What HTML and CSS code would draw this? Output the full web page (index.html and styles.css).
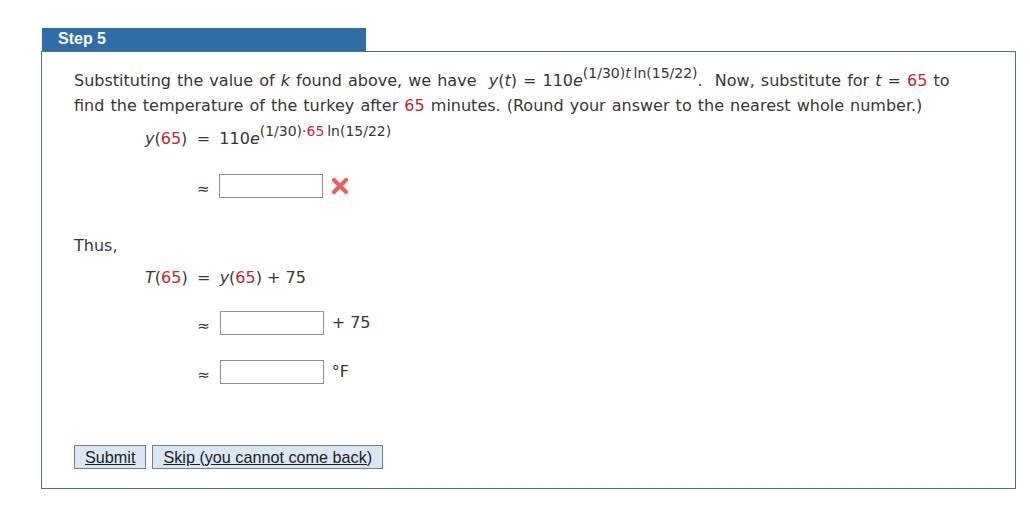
FILE: index.html
```html
<!DOCTYPE html>
<html lang="en">
  <head>
    <meta charset="UTF-8" />
    <title>Step 5</title>
    <link rel="stylesheet" href="styles.css">
  </head>
  <body>
    <div class="step">
      <div class="step-title">Step 5</div>
      <div class="step-box">
        <p class="para">
          Substituting the value of <i>k</i> found above, we have&nbsp; <i>y</i>(<i>t</i>) = 110<i>e</i><sup>(1/30)<i>t</i>&thinsp;ln(15/22)</sup>.&nbsp; Now, substitute for <i>t</i> = <span class="red">65</span> to<br>
          find the temperature of the turkey after <span class="red">65</span> minutes. (Round your answer to the nearest whole number.)
        </p>
        <table class="math math-first">
          <tr class="row-eq">
            <td class="lhs"><i>y</i>(<span class="red">65</span>)</td>
            <td class="rel">=</td>
            <td class="rhs">110<i>e</i><sup>(1/30)&middot;<span class="red">65</span>&thinsp;ln(15/22)</sup></td>
          </tr>
          <tr class="row-in">
            <td class="lhs"></td>
            <td class="rel approx">&asymp;</td>
            <td class="rhs">
              <input class="answer" type="text" /><svg class="wrong" width="18" height="18" viewBox="0 0 18 18">
                <path d="M3 3 L15 15 M15 3 L3 15" stroke="#ec5f5f" stroke-width="4.2" stroke-linecap="round" />
              </svg>
            </td>
          </tr>
        </table>
        <p class="thus">Thus,</p>
        <table class="math math-second">
          <tr class="row-eq">
            <td class="lhs"><i>T</i>(<span class="red">65</span>)</td>
            <td class="rel">=</td>
            <td class="rhs"><i>y</i>(<span class="red">65</span>) + 75</td>
          </tr>
          <tr class="row-in">
            <td class="lhs"></td>
            <td class="rel approx">&asymp;</td>
            <td class="rhs"><input class="answer" type="text" />+ 75</td>
          </tr>
          <tr class="row-in">
            <td class="lhs"></td>
            <td class="rel approx">&asymp;</td>
            <td class="rhs"><input class="answer" type="text" />&deg;F</td>
          </tr>
        </table>
        <div class="actions">
          <button class="button">Submit</button>
          <button class="button">Skip (you cannot come back)</button>
        </div>
      </div>
    </div>
  </body>
</html>
```

FILE: styles.css
```css
* {
  margin: 0;
  padding: 0;
  box-sizing: border-box;
}
body {
  background: #ffffff;
  font-family: "DejaVu Sans", Verdana, sans-serif;
  font-size: 16px;
  color: #363636;
}
.step {
  margin: 28px 0 0 41px;
  width: 975px;
}
.step-title {
  width: 324px;
  height: 23px;
  margin-left: 1px;
  padding: 2px 0 0 16px;
  background: #2e6da8;
  color: #ffffff;
  font-family: "Liberation Sans", Arial, sans-serif;
  font-weight: bold;
  font-size: 16px;
}
.step-box {
  border: 1px solid #4d7382;
  height: 438px;
  padding: 16px 20px 0 32px;
}
.para {
  line-height: 25px;
  word-spacing: 1px;
}
.red {
  color: #c4262e;
}
sup {
  font-size: 14px;
  line-height: 0;
  vertical-align: 8px;
}
/* math rows */
.math {
  border-collapse: collapse;
  margin-left: 71px;
}
.math td {
  padding: 0;
  vertical-align: middle;
}
.lhs {
  text-align: right;
  white-space: nowrap;
}
.rel {
  width: 32px;
  text-align: center;
}
.approx {
  font-family: "DejaVu Sans", sans-serif;
  font-size: 15px;
  padding-top: 30px !important;
}
.rhs {
  white-space: nowrap;
}
.row-eq td {
  height: 22px;
}
.math tr + tr td {
  padding-top: 25px;
}
.math-second tr:nth-child(2) td {
  padding-top: 23px;
}
.math-second tr:nth-child(2) td.approx {
  padding-top: 28px !important;
}
.answer {
  width: 104px;
  height: 24px;
  border: 1px solid #8e8e8e;
  vertical-align: middle;
  margin-right: 8px;
}
.wrong {
  vertical-align: middle;
}
.math-first {
  margin-top: 9px;
}
.thus {
  margin-top: 38px;
  margin-bottom: 11px;
}
.actions {
  margin-top: 61px;
  display: flex;
  gap: 6px;
}
.button {
  background: #dbe6f3;
  border: 1px solid #6a7f98;
  font-family: "Liberation Sans", Arial, sans-serif;
  font-size: 16.2px;
  color: #1d1d1d;
  text-decoration: underline;
  padding: 1px 10px 1px 10px;
  height: 24px;
}
```
